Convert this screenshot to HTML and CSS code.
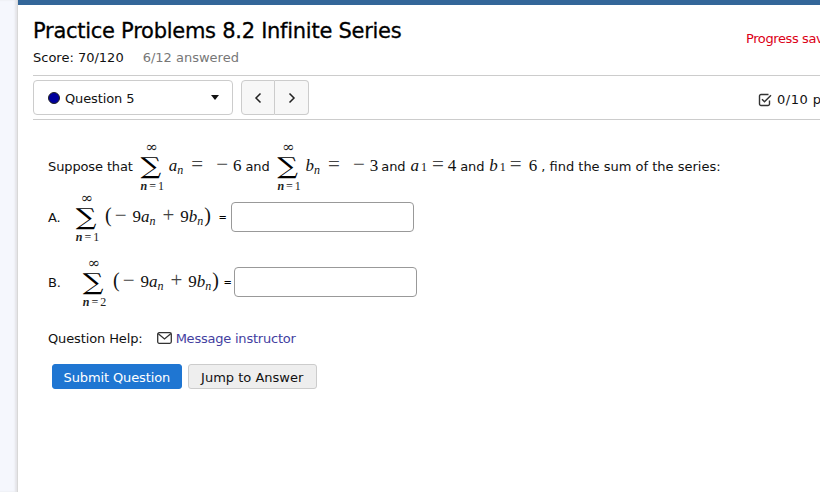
FILE: index.html
```html
<!DOCTYPE html>
<html lang="en">
<head>
<meta charset="utf-8">
<title>Practice Problems 8.2 Infinite Series</title>
<link rel="stylesheet" href="styles.css">
</head>
<body>
<aside class="rail"></aside>
<main class="page">
  <div class="topbar"></div>
  <div class="content">
    <header class="head">
      <div>
        <h1>Practice Problems 8.2 Infinite Series</h1>
        <p class="score"><span>Score: 70/120</span><span class="muted">6/12 answered</span></p>
      </div>
      <div class="saved">Progress saved</div>
    </header>
    <nav class="nav">
      <div class="select"><i class="dot"></i><span class="qname">Question 5</span><i class="caret"></i></div>
      <div class="pager">
        <button class="page-btn"><svg width="8" height="12" viewBox="0 0 8 12"><path d="M6.5 1.500 2 6l4.500 4.500" fill="none" stroke="#222" stroke-width="1.500"/></svg></button>
        <button class="page-btn"><svg width="8" height="12" viewBox="0 0 8 12"><path d="M1.500 1.500 6 6l-4.500 4.500" fill="none" stroke="#222" stroke-width="1.500"/></svg></button>
      </div>
      <div class="points">
        <svg width="14" height="14" viewBox="0 0 14 14"><path d="M11.500 7.500V11a1.500 1.500 0 0 1-1.500 1.500H3A1.500 1.500 0 0 1 1.500 11V3A1.500 1.500 0 0 1 3 1.500h7.500" fill="none" stroke="#333" stroke-width="1.400"/><path d="M4 6.200 6.500 8.700 13 2.200" fill="none" stroke="#333" stroke-width="1.500"/></svg>
        <span>0/10 points</span>
      </div>
    </nav>
    <section class="question">
      <div class="line first">
        <span>Suppose that</span>
        <span class="sum s1"><em class="inf">∞</em><b>∑</b><em class="lim"><i>n</i>=1</em></span>
        <span class="m"><i>a<sub>n</sub></i><span class="op eq">=</span><span class="op neg">−</span><span class="num">6</span></span>
        <span class="word">and</span>
        <span class="sum s1"><em class="inf">∞</em><b>∑</b><em class="lim"><i>n</i>=1</em></span>
        <span class="m"><i>b<sub>n</sub></i><span class="op eq">=</span><span class="op neg">−</span><span class="num">3</span></span>
        <span class="word near">and</span>
        <span class="m lead"><i>a</i><sub>1</sub><span class="op eq short">=</span>4</span>
        <span class="word">and</span>
        <span class="m lead"><i>b</i><sub>1</sub><span class="op eq wide">=</span>6</span>
        <span class="comma">, find the sum of the series:</span>
      </div>
      <div class="line part a">
        <span class="label">A.</span>
        <span class="sum"><em class="inf">∞</em><b>∑</b><em class="lim"><i>n</i>=1</em></span>
        <span class="m expr"><span class="paren">(</span><span class="op minus">−</span>9<i>a<sub>n</sub></i><span class="op plus">+</span>9<i>b<sub>n</sub></i><span class="paren">)</span></span>
        <span class="equals">=</span>
        <input class="answer" type="text" aria-label="Answer A">
      </div>
      <div class="line part b">
        <span class="label">B.</span>
        <span class="sum"><em class="inf">∞</em><b>∑</b><em class="lim"><i>n</i>=2</em></span>
        <span class="m expr"><span class="paren">(</span><span class="op minus">−</span>9<i>a<sub>n</sub></i><span class="op plus">+</span>9<i>b<sub>n</sub></i><span class="paren">)</span></span>
        <span class="equals">=</span>
        <input class="answer" type="text" aria-label="Answer B">
      </div>
      <div class="help">
        <span>Question Help:</span>
        <svg width="15" height="12" viewBox="0 0 15 12"><rect x=".7" y=".7" width="13.600" height="10.600" rx="1.500" fill="none" stroke="#333" stroke-width="1.300"/><path d="M1 1.500 7.500 7 14 1.500" fill="none" stroke="#333" stroke-width="1.300"/></svg>
        <a href="#">Message instructor</a>
      </div>
      <div class="actions">
        <button class="btn primary">Submit Question</button>
        <button class="btn jump">Jump to Answer</button>
      </div>
    </section>
  </div>
</main>
</body>
</html>
```
FILE: styles.css
```css
* { box-sizing: border-box; }
html, body { margin: 0; height: 100%; overflow: hidden; }
body {
  display: flex;
  width: 820px;
  height: 492px;
  background: #fff;
  color: #111;
  font-family: "DejaVu Sans", sans-serif;
  font-size: 13px;
  letter-spacing: -0.12px;
}
.rail {
  flex: 0 0 18px;
  background: #f5f7fd;
  border-right: 1px solid #d8d8d8;
  box-shadow: inset -2px 0 2px #e4e4e8;
}
.page { flex: 0 0 802px; min-width: 0; overflow: hidden; }
.topbar { height: 5px; background: #336699; }
.content { width: 830px; padding: 0 0 0 15px; }
.head { display: flex; justify-content: space-between; height: 71px; padding-top: 13px; border-bottom: 1px solid #ccc; width: 815px; }
h1 { margin: 0; font-size: 21px; line-height: 26px; font-weight: 400; color: #000; letter-spacing: -0.27px; -webkit-text-stroke: 0.3px #000; }
.score { margin: 6px 0 0; line-height: 16px; display: flex; gap: 19px; letter-spacing: 0; }
.muted { color: #777; }
.saved { color: #dc0016; margin-top: 13px; white-space: nowrap; width: 102px; overflow: hidden; flex: none; letter-spacing: -0.4px; }
.nav { display: flex; align-items: center; height: 44px; border-bottom: 1px solid #ccc; width: 815px; }
.select { flex: 0 0 200px; height: 35px; border: 1px solid #ccc; border-radius: 4px; display: flex; align-items: center; padding: 0 13px 0 14px; }
.qname { padding-top: 2px; margin-left: -1px; }
.dot { width: 12px; height: 12px; border-radius: 50%; background: #00009c; border: 1px solid #222; margin-right: 6px; }
.caret { margin-left: auto; border: 4px solid transparent; border-top: 5px solid #111; border-bottom: 0; width: 8px; height: 5px; }
.pager { display: flex; margin-left: 8px; }
.page-btn { width: 34px; height: 35px; padding: 0; background: #f7f7f7; border: 1px solid #ccc; border-radius: 4px 0 0 4px; display: flex; align-items: center; justify-content: center; }
.page-btn + .page-btn { border-left: 0; border-radius: 0 4px 4px 0; }
.points { display: flex; align-items: center; gap: 5px; margin-left: 449px; padding-top: 4px; white-space: nowrap; letter-spacing: 0.5px; }
.question { padding-left: 15px; }
.line { display: flex; align-items: center; white-space: nowrap; }
.first { margin-top: 19px; height: 54px; }
.sum { display: inline-flex; flex: none; flex-direction: column; align-items: center; width: 27px; height: 50px; margin-top: 2px; font-family: "Liberation Serif", serif; letter-spacing: 0; }
.s1 { margin: 2px 2px 0 7px; }
.inf { font-style: normal; font-size: 15px; line-height: 11px; height: 11px; margin: 0 3px 1px 0; color: #222; font-family: "DejaVu Serif", serif; }
.lim { font-style: normal; font-size: 12px; line-height: 12px; height: 12px; color: #222; letter-spacing: 2px; margin-top: 2px; }
.lim i { font-weight: 700; }
.sum b { font-weight: 400; font-size: 29px; line-height: 24px; height: 24px; font-family: "DejaVu Serif", serif; color: #000; margin-right: 5px; transform: scaleY(0.8); }
.m { font-family: "Liberation Serif", serif; font-size: 17px; letter-spacing: 0; display: inline-flex; align-items: baseline; color: #111; }
.m sub { font-size: 12px; line-height: 0; vertical-align: -3px; }
.lead sub { margin-left: 2px; }
.op { font-size: 21px; line-height: 17px; color: #444; }
.eq { margin: 0 13px 0 8px; }
.neg { margin-right: 5px; }
.eq.short { margin: 0 4px 0 5px; }
.eq.wide { margin: 0 7px 0 4px; }
.lead { margin-left: 5px; }
.word { margin-left: 4px; }
.word.near { margin-left: 3px; }
.word + .sum { margin-left: 7px; }
.comma { margin-left: 4px; letter-spacing: 0; }
.part { height: 50px; }
.a { margin-top: -1px; }
.b { margin-top: 15px; }
.label { flex: 0 0 27px; }
.b .label { flex-basis: 34px; }
.paren { font-size: 20px; line-height: 17px; font-weight: 400; color: #111; }
.expr { margin-left: 3px; }
.b .expr { margin-left: 4px; }
.minus { margin: 0 6px 0 3px; }
.plus { margin: 0 6px 0 7px; }
.paren:last-child { margin-left: 1px; }
.equals { margin: 0 4.600px 0 7.500px; font-size: 10px; color: #000; }
.b .equals { margin: 0 2.600px 0 4.500px; }
.answer { width: 183px; height: 30px; border: 1px solid #999; border-radius: 4px; background: #fff; }
.help { display: flex; align-items: center; margin-top: 22px; height: 18px; }
.help svg { margin: 0 4px 0 14px; }
.help a { color: #43409f; text-decoration: none; letter-spacing: -0.22px; }
.actions { display: flex; gap: 6px; margin: 17px 0 0 4px; }
.btn { height: 25px; padding: 2px 10.500px 0; font: inherit; letter-spacing: inherit; background: #eee; border: 1px solid #ccc; border-radius: 3px; color: #111; }
.primary { background: #1f76d2; border-color: #1f76d2; color: #fff; }
.jump { padding: 2px 12.500px 0; letter-spacing: 0; }
```
